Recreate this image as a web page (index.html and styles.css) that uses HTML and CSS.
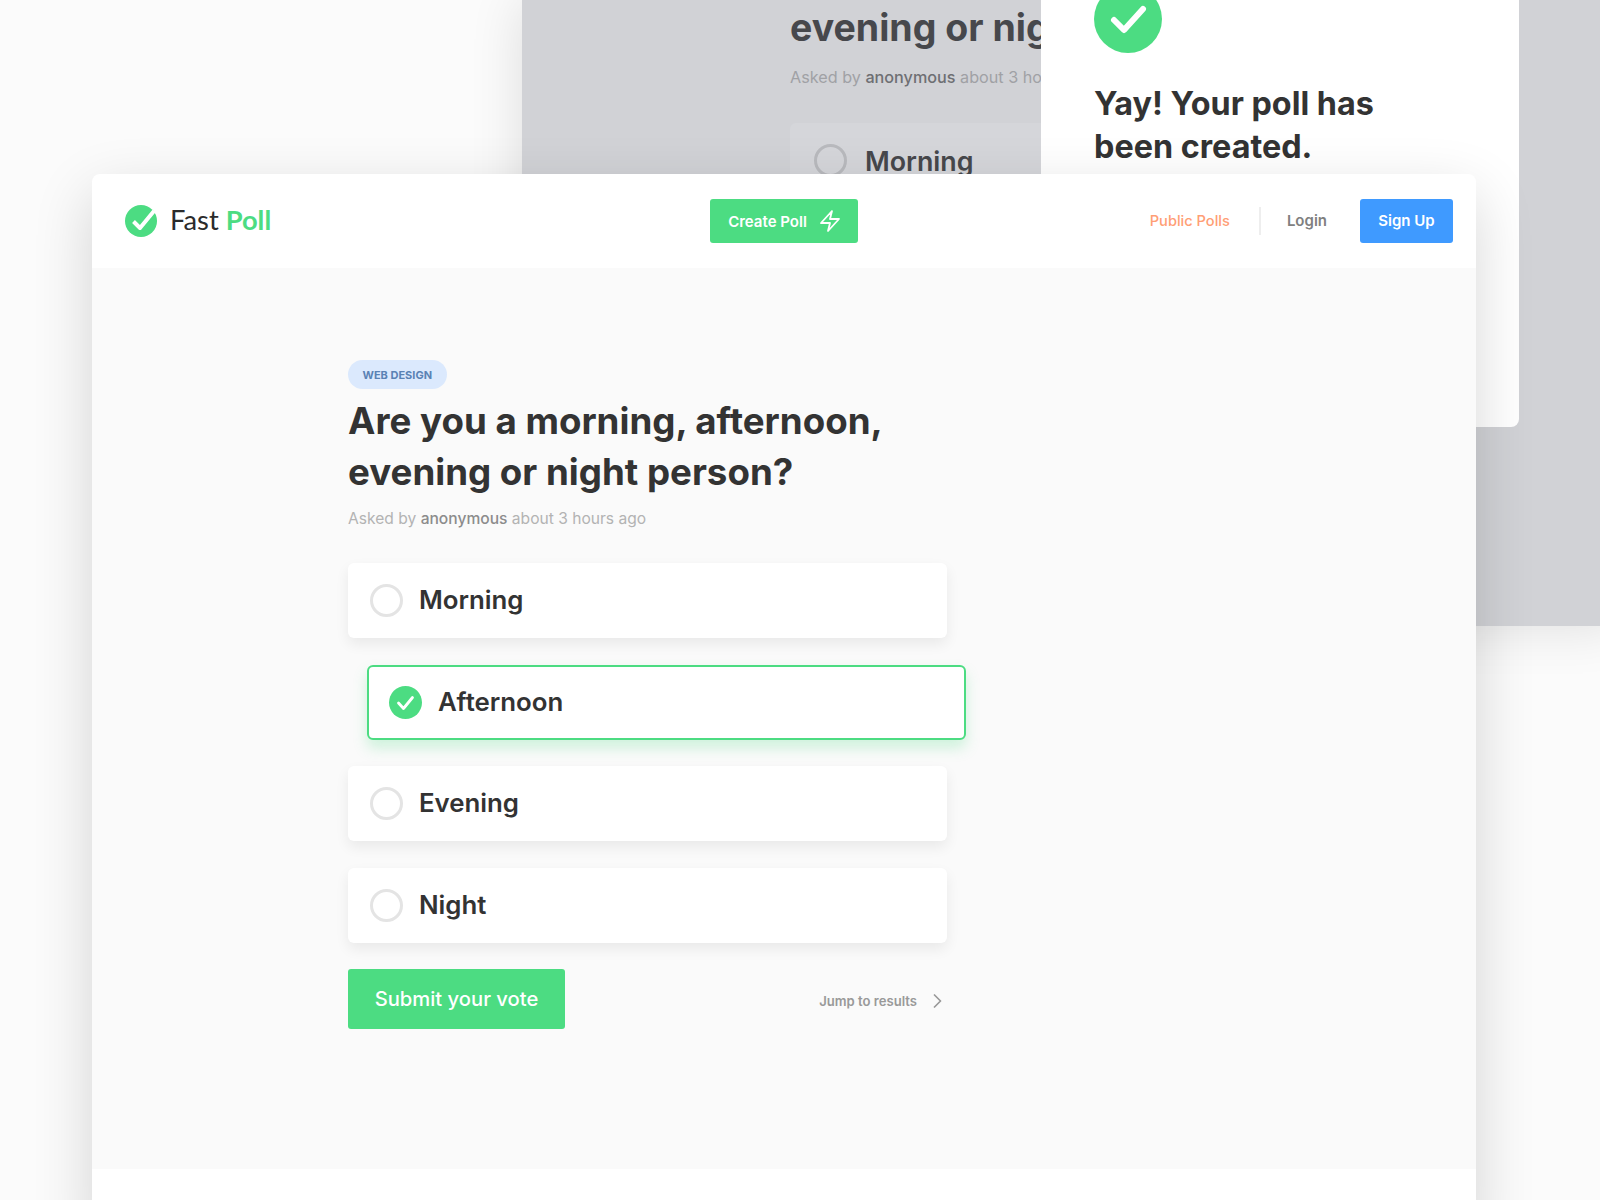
FILE: index.html
```html
<!DOCTYPE html>
<html lang="en">
<head>
    <meta charset="UTF-8">
    <meta name="viewport" content="width=device-width, initial-scale=1.0">
    <title>Fast Poll</title>
    <link rel="stylesheet" href="styles.css">
</head>
<body>

<div class="stage">
    <!-- window behind, dimmed by the modal -->
    <div class="back-window">
        <h2 class="back-title">evening or night person?</h2>
        <p class="asked">Asked by <b>anonymous</b> about 3 hours ago</p>
        <div class="back-option">
            <span class="back-radio"></span>
            <span>Morning</span>
        </div>
    </div>

    <div class="modal">
        <svg class="modal-check" viewBox="0 0 68 68">
            <circle cx="34" cy="34" r="34" fill="#4cdc82"/>
            <path d="M20 35l10 10 19-21" fill="none" stroke="#fff" stroke-width="6" stroke-linecap="round" stroke-linejoin="round"/>
        </svg>
        <h2 class="modal-title">Yay! Your poll has<br>been created.</h2>
    </div>

    <div class="window">
        <header class="header">
            <div class="logo">
                <svg class="logo-icon" viewBox="0 0 32 32">
                    <circle cx="16" cy="16" r="16" fill="#4cdc82"/>
                    <path d="M8.500 16.500L15 23 29 6" fill="none" stroke="#fff" stroke-width="4" stroke-linejoin="round"/>
                </svg>
                <span class="logo-text">Fast <em>Poll</em></span>
            </div>
            <a class="btn-create">
                Create Poll
                <svg class="bolt" viewBox="0 0 24 24">
                    <polygon points="14 2 3 14 12 14 10 22 21 10 12 10 14 2" fill="none" stroke="#fff" stroke-width="1.800" stroke-linejoin="round"/>
                </svg>
            </a>
            <nav class="nav">
                <a class="nav-public">Public Polls</a>
                <span class="nav-divider"></span>
                <a class="nav-login">Login</a>
                <a class="btn-signup">Sign Up</a>
            </nav>
        </header>

        <main class="content">
            <span class="tag">WEB DESIGN</span>
            <h1 class="title">Are you a morning, afternoon,<br>evening or night person?</h1>
            <p class="asked">Asked by <b>anonymous</b> about 3 hours ago</p>

            <div class="options">
                <div class="option">
                    <span class="radio"></span>
                    <span class="option-label">Morning</span>
                </div>
                <div class="option option-selected">
                    <svg class="radio-checked" viewBox="0 0 33 33">
                        <circle cx="16.500" cy="16.500" r="16.500" fill="#4cdc82"/>
                        <path d="M9.500 17l5 5.500 9-11" fill="none" stroke="#fff" stroke-width="2.800" stroke-linecap="round" stroke-linejoin="round"/>
                    </svg>
                    <span class="option-label">Afternoon</span>
                </div>
                <div class="option">
                    <span class="radio"></span>
                    <span class="option-label">Evening</span>
                </div>
                <div class="option">
                    <span class="radio"></span>
                    <span class="option-label">Night</span>
                </div>
            </div>

            <div class="actions">
                <button class="btn-submit" type="button">Submit your vote</button>
                <a class="jump">
                    Jump to results
                    <svg class="chevron" viewBox="0 0 9 14">
                        <path d="M1.500 1l6 6-6 6" fill="none" stroke="#999" stroke-width="1.700" stroke-linecap="round" stroke-linejoin="round"/>
                    </svg>
                </a>
            </div>
        </main>

        <footer class="footer"></footer>
    </div>
</div>

</body>
</html>
```

FILE: styles.css
```css
* {
    box-sizing: border-box;
}
body {
    margin: 0;
    background-color: #fbfbfb;
    font-family: Inter, "Noto Sans", sans-serif;
    color: #333;
}
.stage {
    position: relative;
    width: 1600px;
    height: 1200px;
    overflow: hidden;
}

/* back window */
.back-window {
    position: absolute;
    left: 522px;
    top: 0;
    width: 1100px;
    height: 626px;
    padding: 2px 0 0 268px;
    background-color: #d1d2d6;
    box-shadow: 0 0 50px rgba(0, 0, 0, 0.12);
}
.back-title {
    margin: 0 0 12px;
    font-size: 37.500px;
    font-weight: 700;
    line-height: 51px;
    white-space: nowrap;
    color: #47484c;
}
.back-window .asked {
    margin: 0 0 34px;
    font-size: 16.200px;
    color: #a0a1a5;
}
.back-window .asked b {
    color: #6e6f73;
}
.back-option {
    display: flex;
    align-items: center;
    gap: 18px;
    width: 599px;
    height: 75px;
    padding-left: 24px;
    border-radius: 6px;
    background-color: #d5d6da;
    font-size: 26.800px;
    font-weight: 600;
    color: #47484c;
}
.back-radio {
    width: 33px;
    height: 33px;
    border: 3px solid #b9babe;
    border-radius: 50%;
}

/* modal */
.modal {
    position: absolute;
    left: 1041px;
    top: -15px;
    width: 478px;
    height: 442px;
    padding-left: 53px;
    border-radius: 0 0 8px 8px;
    background-color: #fff;
}
.modal-check {
    display: block;
    width: 68px;
    height: 68px;
}
.modal-title {
    margin: 29px 0 0;
    font-size: 32.350px;
    font-weight: 700;
    line-height: 43px;
    color: #333;
}

/* main window */
.window {
    position: absolute;
    left: 92px;
    top: 174px;
    width: 1384px;
    height: 1060px;
    display: flex;
    flex-direction: column;
    border-radius: 8px 8px 0 0;
    background-color: #fff;
    box-shadow: 0 20px 60px rgba(0, 0, 0, 0.16);
}
.header {
    display: grid;
    grid-template-columns: 1fr auto 1fr;
    align-items: center;
    height: 94px;
    padding: 0 23px;
}
.logo {
    display: flex;
    align-items: center;
    gap: 13px;
    margin-left: 10px;
    font-family: Lato, sans-serif;
    font-size: 27.300px;
    color: #2b2b2b;
}
.logo-text {
    padding-bottom: 4px;
}
.logo-icon {
    width: 32px;
    height: 32px;
}
.logo em {
    font-style: normal;
    font-weight: 700;
    color: #4cdc82;
}
.btn-create {
    display: flex;
    align-items: center;
    gap: 11px;
    height: 44px;
    padding: 0 16px 0 18px;
    border-radius: 3px;
    background-color: #4cdc82;
    font-size: 15px;
    font-weight: 600;
    color: #fff;
}
.bolt {
    width: 24px;
    height: 24px;
}
.nav {
    display: flex;
    align-items: center;
    justify-content: flex-end;
}
.nav-public {
    padding-bottom: 1px;
    font-size: 14.600px;
    font-weight: 500;
    color: #ff9e75;
}
.nav-divider {
    width: 2px;
    height: 28px;
    margin: 0 26px 0 29px;
    background-color: #eee;
}
.nav-login {
    margin-right: 33px;
    padding-bottom: 2px;
    font-size: 15px;
    font-weight: 600;
    color: #808080;
}
.btn-signup {
    display: flex;
    align-items: center;
    justify-content: center;
    width: 93px;
    height: 44px;
    padding-bottom: 2px;
    border-radius: 3px;
    background-color: #3f9aff;
    font-size: 15px;
    font-weight: 600;
    color: #fff;
}

.content {
    display: flex;
    flex-direction: column;
    align-items: flex-start;
    height: 901px;
    padding: 92px 0 0 256px;
    background-color: #fafafa;
}
.tag {
    display: flex;
    align-items: center;
    height: 29px;
    padding: 0 14.500px;
    border-radius: 15px;
    background-color: #dbe9fd;
    font-size: 11px;
    font-weight: 700;
    color: #5a82b4;
}
.title {
    margin: 6px 0 10px;
    font-size: 36.700px;
    font-weight: 700;
    line-height: 51px;
    color: #333;
}
.asked {
    margin: 0;
    font-size: 15.600px;
    line-height: 24px;
    color: #b3b3b3;
}
.asked b {
    font-weight: 500;
    color: #8c8c8c;
}
.options {
    display: flex;
    flex-direction: column;
    gap: 26.500px;
    margin-top: 32px;
}
.option {
    display: flex;
    align-items: center;
    gap: 16px;
    width: 599px;
    height: 75px;
    padding-left: 22px;
    border-radius: 6px;
    background-color: #fff;
    box-shadow: 0 6px 14px rgba(0, 0, 0, 0.07);
    font-size: 25.800px;
    font-weight: 600;
    color: #333;
}
.option-label {
    padding-bottom: 2px;
}
.option-selected {
    margin-left: 19px;
    padding-left: 20px;
    border: 2px solid #4cdc82;
    box-shadow: 0 8px 14px rgba(76, 220, 130, 0.25);
}
.radio {
    width: 33px;
    height: 33px;
    border: 3px solid #e4e4e4;
    border-radius: 50%;
}
.radio-checked {
    width: 33px;
    height: 33px;
}
.actions {
    display: flex;
    align-items: center;
    justify-content: space-between;
    width: 599px;
    margin-top: 26px;
}
.btn-submit {
    width: 217px;
    height: 60px;
    border: none;
    border-radius: 3px;
    background-color: #4cdc82;
    font-family: inherit;
    font-size: 20.200px;
    font-weight: 500;
    color: #fff;
}
.jump {
    display: flex;
    align-items: center;
    gap: 16px;
    padding: 4px 5px 0 0;
    font-size: 13.100px;
    font-weight: 600;
    color: #999;
}
.chevron {
    width: 9px;
    height: 14px;
}
.footer {
    flex: 1;
    background-color: #fff;
}
```
